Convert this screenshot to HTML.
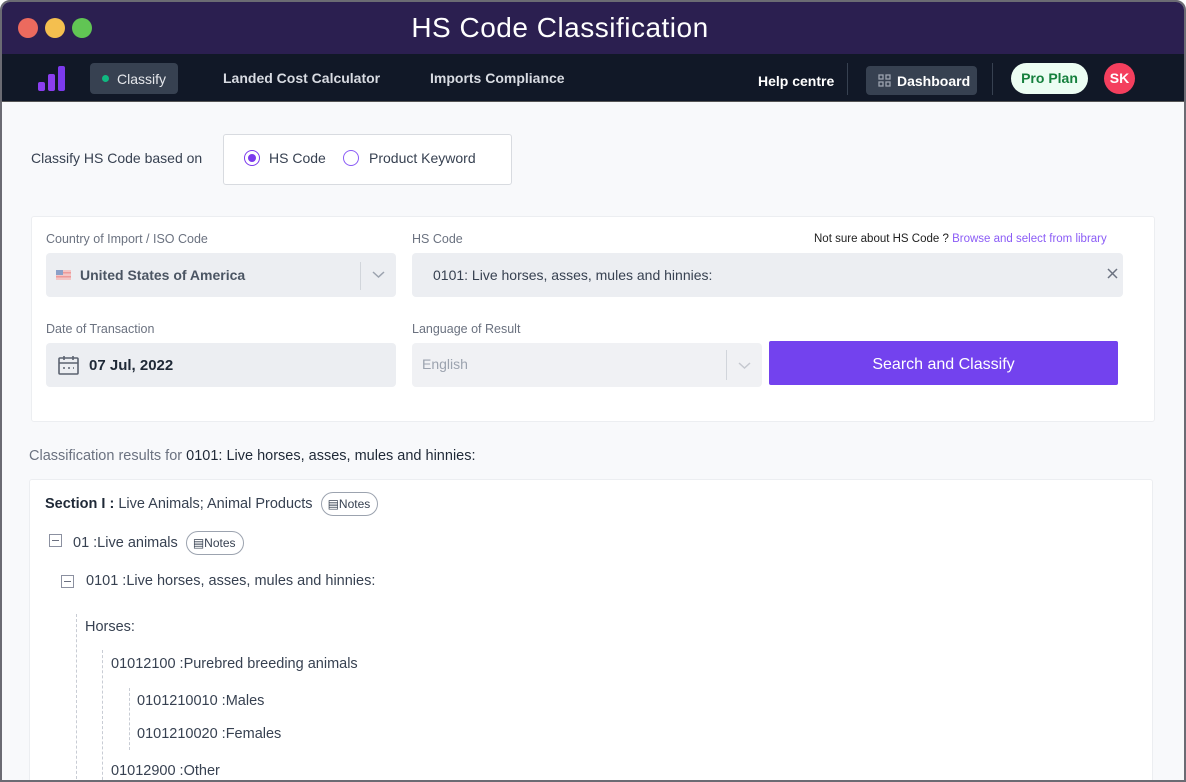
<!DOCTYPE html>
<html><head><meta charset="utf-8"><style>
*{box-sizing:border-box;margin:0;padding:0}
body{width:1186px;height:780px;overflow:hidden;background:#fff;font-family:"Liberation Sans",sans-serif;position:relative}
.win{position:absolute;left:0;top:0;width:1186px;height:782px;border:2px solid #6b6b73;border-radius:10px 10px 0 0;overflow:hidden;background:#f8f9fb}
.a{position:absolute}
.title{left:0;top:0;width:100%;height:52px;background:#2b1f50}
.dot{width:20px;height:20px;border-radius:50%;top:16px}
.nav{left:0;top:52px;width:100%;height:48px;background:#111827;border-bottom:1px solid #555}
.nt{color:#d8dbe2;font-size:14px;font-weight:bold}
.lbl{font-size:12.5px;color:#6b7280}
.inp{background:#eceef2;border-radius:4px}
.t{font-size:15px;color:#374151}
.notes{border:1px solid #9ca3af;border-radius:12px;font-size:12px;color:#374151;height:24px;padding:0 7px 0 6px;line-height:22px;display:inline-block;vertical-align:middle}
.minus{width:13px;height:13px;border:1px solid #8b90a0;}
.minus:after{content:"";position:absolute;left:2px;top:5px;width:7px;height:1px;background:#6b7080}
.vl{border-left:1px dashed #c8ccd4;width:0}
</style></head><body>
<div class="win">
 <div class="a title"></div>
 <div class="a dot" style="left:16px;background:#ec6a5e"></div>
 <div class="a dot" style="left:43px;background:#f4bf4f"></div>
 <div class="a dot" style="left:70px;background:#61c554"></div>
 <div class="a" style="left:-33px;width:100%;top:10px;text-align:center;color:#fff;font-size:28px;letter-spacing:0.5px">HS Code Classification</div>
 <div class="a nav"></div>
 <svg class="a" style="left:34px;top:63px" width="34" height="28"><rect x="2" y="17" width="7" height="9" rx="2" fill="#8b3ef0"/><rect x="12" y="9" width="7" height="17" rx="2" fill="#8b3ef0"/><rect x="22" y="1" width="7" height="25" rx="2" fill="#7c3aed"/></svg>
 <div class="a" style="left:88px;top:61px;width:88px;height:31px;background:#374151;border-radius:4px"></div>
 <div class="a" style="left:100px;top:73px;width:7px;height:7px;border-radius:50%;background:#10b981"></div>
 <div class="a nt" style="left:115px;top:69px;font-weight:normal;color:#e5e7eb">Classify</div>
 <div class="a nt" style="left:221px;top:68px">Landed Cost Calculator</div>
 <div class="a nt" style="left:428px;top:68px">Imports Compliance</div>
 <div class="a nt" style="left:756px;top:71px;color:#fff">Help centre</div>
 <div class="a" style="left:845px;top:61px;width:1px;height:32px;background:#374151"></div>
 <div class="a" style="left:864px;top:64px;width:111px;height:29px;background:#374151;border-radius:4px"></div>
 <svg class="a" style="left:876px;top:72px" width="13" height="13" fill="none" stroke="#9ca3af" stroke-width="1.3"><rect x="1" y="1" width="4" height="4"/><rect x="8" y="1" width="4" height="4"/><rect x="1" y="8" width="4" height="4"/><rect x="8" y="8" width="4" height="4"/></svg>
 <div class="a nt" style="left:895px;top:71px;color:#fff">Dashboard</div>
 <div class="a" style="left:990px;top:61px;width:1px;height:32px;background:#374151"></div>
 <div class="a" style="left:1009px;top:61px;width:77px;height:31px;background:#ecfdf3;border-radius:16px;color:#15803d;font-size:14px;font-weight:bold;text-align:center;line-height:31px">Pro Plan</div>
 <div class="a" style="left:1102px;top:61px;width:31px;height:31px;background:#f43f5e;border-radius:50%;color:#fff;font-size:14px;font-weight:bold;text-align:center;line-height:31px">SK</div>

 <div class="a t" style="left:29px;top:148px;font-size:14px">Classify HS Code based on</div>
 <div class="a" style="left:221px;top:132px;width:289px;height:51px;background:#fff;border:1px solid #d8dbe0;border-radius:3px"></div>
 <div class="a" style="left:242px;top:148px;width:16px;height:16px;border:1.5px solid #7c3aed;border-radius:50%"></div>
 <div class="a" style="left:246px;top:152px;width:8px;height:8px;background:#7c3aed;border-radius:50%"></div>
 <div class="a t" style="left:267px;top:148px;font-size:14px">HS Code</div>
 <div class="a" style="left:341px;top:148px;width:16px;height:16px;border:1.5px solid #8b5cf6;border-radius:50%"></div>
 <div class="a t" style="left:367px;top:148px;font-size:14px">Product Keyword</div>

 <div class="a" style="left:29px;top:214px;width:1124px;height:206px;background:#fff;border:1px solid #eceef1;border-radius:3px"></div>
 <div class="a lbl" style="left:44px;top:230px">Country of Import / ISO Code</div>
 <div class="a inp" style="left:44px;top:251px;width:350px;height:44px"></div>
 <svg class="a" style="left:54px;top:268px" width="15" height="10"><rect width="15" height="10" fill="#f3c5c5"/><rect y="2" width="15" height="1.5" fill="#e99"/><rect y="6" width="15" height="1.5" fill="#e99"/><rect width="7" height="5" fill="#8ba0c8"/></svg>
 <div class="a" style="left:78px;top:265px;font-size:14px;font-weight:bold;color:#4b5563">United States of America</div>
 <div class="a" style="left:358px;top:260px;width:1px;height:28px;background:#d1d5db"></div>
 <svg class="a" style="left:370px;top:269px" width="13" height="8" fill="none" stroke="#9ca3af" stroke-width="1.5"><path d="M1 1l5.5 5 5.5-5"/></svg>

 <div class="a lbl" style="left:410px;top:230px">HS Code</div>
 <div class="a" style="left:812px;top:231px;font-size:11.5px;color:#222">Not sure about HS Code ? <span style="color:#8b5cf6">Browse and select from library</span></div>
 <div class="a inp" style="left:410px;top:251px;width:711px;height:44px"></div>
 <div class="a t" style="left:431px;top:265px;font-size:14px">0101: Live horses, asses, mules and hinnies:</div>
 <svg class="a" style="left:1105px;top:266px" width="11" height="11" stroke="#6b7280" stroke-width="1.5"><path d="M1 1l9 9M10 1l-9 9"/></svg>

 <div class="a lbl" style="left:44px;top:320px">Date of Transaction</div>
 <div class="a inp" style="left:44px;top:341px;width:350px;height:44px"></div>
 <svg class="a" style="left:56px;top:353px" width="21" height="20" fill="none" stroke="#5b6270" stroke-width="1.6"><rect x="1" y="3" width="19" height="16" rx="1"/><path d="M1 8h19M6 1v4M15 1v4"/><path d="M5 13h2M10 13h2M15 13h1" stroke-width="1.5"/></svg>
 <div class="a" style="left:87px;top:355px;font-size:15px;font-weight:bold;color:#1f2937">07 Jul, 2022</div>

 <div class="a lbl" style="left:410px;top:320px">Language of Result</div>
 <div class="a inp" style="left:410px;top:341px;width:350px;height:44px;background:#f0f1f4"></div>
 <div class="a" style="left:420px;top:354px;font-size:14px;color:#9ca3af">English</div>
 <div class="a" style="left:724px;top:348px;width:1px;height:30px;background:#d1d5db"></div>
 <svg class="a" style="left:736px;top:360px" width="13" height="8" fill="none" stroke="#c5c8cf" stroke-width="1.5"><path d="M1 1l5.5 5 5.5-5"/></svg>
 <div class="a" style="left:767px;top:339px;width:349px;height:44px;background:#7342ee;border-radius:2px;color:#fff;font-size:16px;text-align:center;line-height:48px">Search and Classify</div>

 <div class="a" style="left:27px;top:446px;font-size:14.5px;color:#6b7280">Classification results for <span style="color:#1f2937">0101: Live horses, asses, mules and hinnies:</span></div>
 <div class="a" style="left:27px;top:477px;width:1124px;height:330px;background:#fff;border:1px solid #eceef1;border-radius:3px"></div>
 <div class="a t" style="left:43px;top:490px;font-size:14.5px"><b style="color:#1f2937">Section I :</b> Live Animals; Animal Products <span class="notes" style="margin-left:4px">&#9636;Notes</span></div>
 <div class="a minus" style="left:47px;top:532px"></div>
 <div class="a t" style="left:71px;top:529px;font-size:14.5px">01 :Live animals <span class="notes" style="margin-left:4px">&#9636;Notes</span></div>
 <div class="a minus" style="left:59px;top:573px"></div>
 <div class="a t" style="left:84px;top:571px;font-size:14.5px">0101 :Live horses, asses, mules and hinnies:</div>
 <div class="a vl" style="left:74px;top:612px;height:170px"></div>
 <div class="a t" style="left:83px;top:617px;font-size:14.5px">Horses:</div>
 <div class="a vl" style="left:100px;top:648px;height:140px"></div>
 <div class="a t" style="left:109px;top:654px;font-size:14.5px">01012100 :Purebred breeding animals</div>
 <div class="a vl" style="left:127px;top:686px;height:62px"></div>
 <div class="a t" style="left:135px;top:691px;font-size:14.5px">0101210010 :Males</div>
 <div class="a t" style="left:135px;top:724px;font-size:14.5px">0101210020 :Females</div>
 <div class="a t" style="left:109px;top:761px;font-size:14.5px">01012900 :Other</div>
</div>
</body></html>
